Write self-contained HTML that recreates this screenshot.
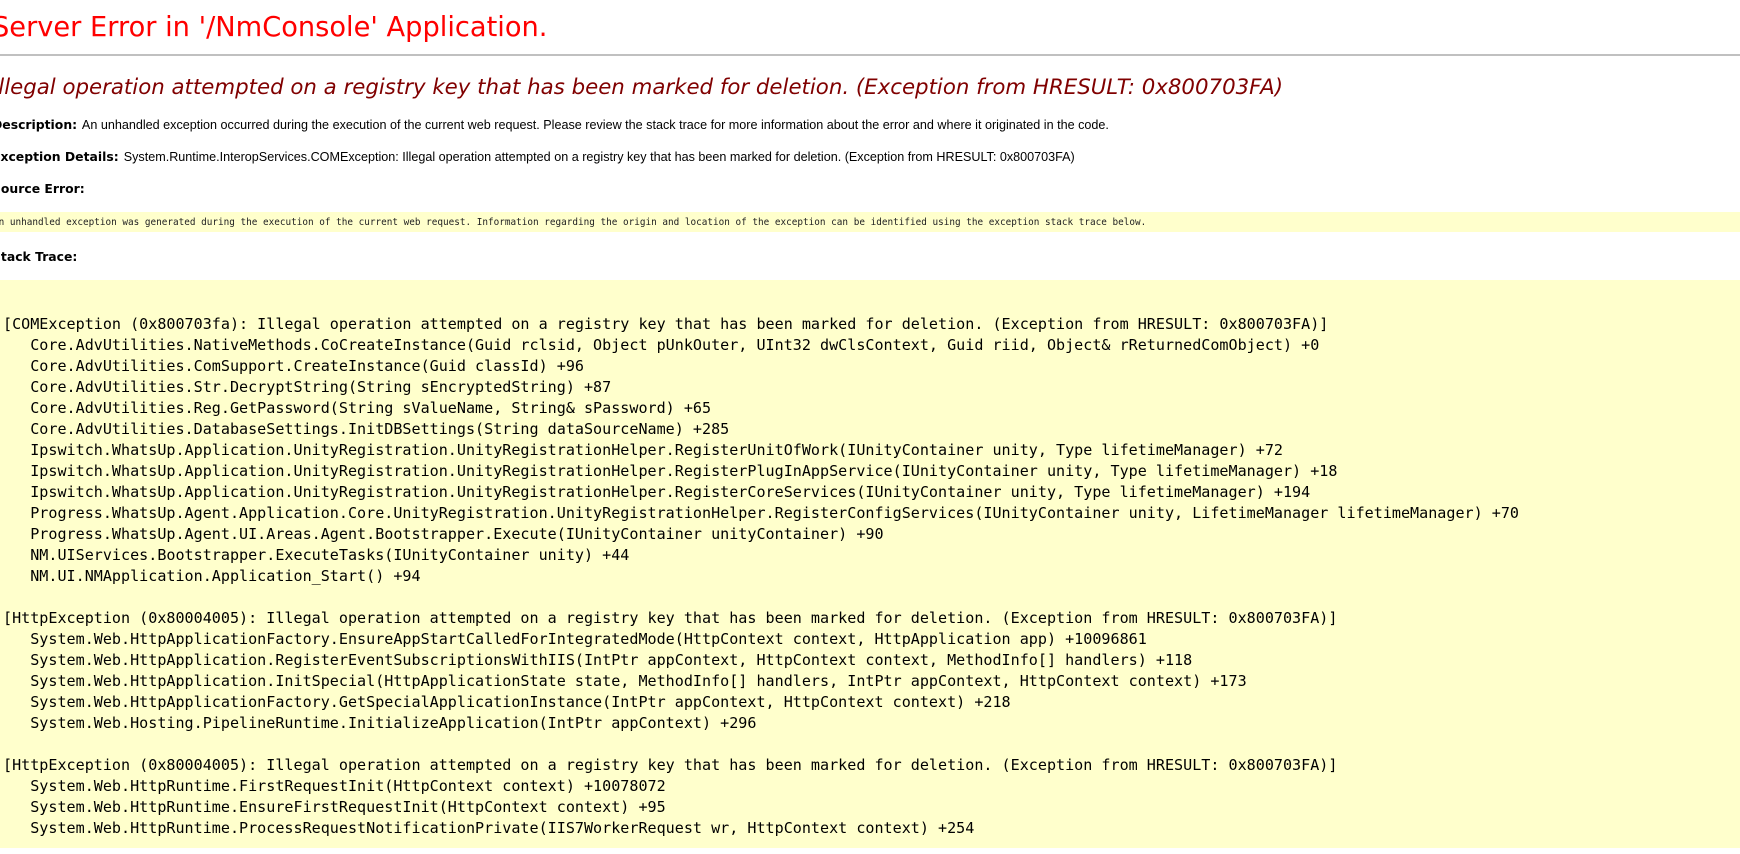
<!DOCTYPE html>
<html><head><meta charset="utf-8"><style>
html,body{margin:0;padding:0;width:1740px;height:854px;overflow:hidden;background:#fff;color:#000}
.a{position:absolute;white-space:pre;margin:0}
.v{font-family:"DejaVu Sans",Verdana,sans-serif}
.l{font-family:"Liberation Sans",Arial,sans-serif}
.m{font-family:"DejaVu Sans Mono","Liberation Mono",monospace}
b{font-family:"DejaVu Sans",Verdana,sans-serif;font-weight:bold;font-size:12.4px}
</style></head><body>
<div class="a v" style="left:-8px;top:13px;font-size:27.25px;line-height:30px;color:#f00">Server Error in '/NmConsole' Application.</div>
<div style="position:absolute;left:0;top:54px;width:1740px;height:2px;background:#c0c0c0"></div>
<div class="a v" style="left:-8px;top:74px;font-size:21.3px;line-height:28px;font-style:italic;color:#800000">Illegal operation attempted on a registry key that has been marked for deletion. (Exception from HRESULT: 0x800703FA)</div>
<div class="a l" style="left:-8px;top:116px;font-size:12.6px;line-height:18px"><b style="margin-right:2px">Description:</b> An unhandled exception occurred during the execution of the current web request. Please review the stack trace for more information about the error and where it originated in the code.</div>
<div class="a l" style="left:-8px;top:148px;font-size:12.6px;line-height:18px"><b style="margin-right:1.5px">Exception Details:</b> System.Runtime.InteropServices.COMException: Illegal operation attempted on a registry key that has been marked for deletion. (Exception from HRESULT: 0x800703FA)</div>
<div class="a" style="left:-8px;top:180px;font-size:13px;line-height:18px"><b>Source Error:</b></div>
<div style="position:absolute;left:0;top:212px;width:1740px;height:20px;background:#ffffcc"></div>
<div class="a m" style="left:-7px;top:213px;font-size:9.36px;line-height:20px;color:#222">An unhandled exception was generated during the execution of the current web request. Information regarding the origin and location of the exception can be identified using the exception stack trace below.</div>
<div class="a" style="left:-8px;top:248px;font-size:13px;line-height:18px"><b>Stack Trace:</b></div>
<div style="position:absolute;left:0;top:280px;width:1740px;height:568px;background:#ffffcc"></div>
<pre class="a m" style="left:3px;top:313.6px;font-size:15.087px;line-height:21px;color:#000">[COMException (0x800703fa): Illegal operation attempted on a registry key that has been marked for deletion. (Exception from HRESULT: 0x800703FA)]
   Core.AdvUtilities.NativeMethods.CoCreateInstance(Guid rclsid, Object pUnkOuter, UInt32 dwClsContext, Guid riid, Object&amp; rReturnedComObject) +0
   Core.AdvUtilities.ComSupport.CreateInstance(Guid classId) +96
   Core.AdvUtilities.Str.DecryptString(String sEncryptedString) +87
   Core.AdvUtilities.Reg.GetPassword(String sValueName, String&amp; sPassword) +65
   Core.AdvUtilities.DatabaseSettings.InitDBSettings(String dataSourceName) +285
   Ipswitch.WhatsUp.Application.UnityRegistration.UnityRegistrationHelper.RegisterUnitOfWork(IUnityContainer unity, Type lifetimeManager) +72
   Ipswitch.WhatsUp.Application.UnityRegistration.UnityRegistrationHelper.RegisterPlugInAppService(IUnityContainer unity, Type lifetimeManager) +18
   Ipswitch.WhatsUp.Application.UnityRegistration.UnityRegistrationHelper.RegisterCoreServices(IUnityContainer unity, Type lifetimeManager) +194
   Progress.WhatsUp.Agent.Application.Core.UnityRegistration.UnityRegistrationHelper.RegisterConfigServices(IUnityContainer unity, LifetimeManager lifetimeManager) +70
   Progress.WhatsUp.Agent.UI.Areas.Agent.Bootstrapper.Execute(IUnityContainer unityContainer) +90
   NM.UIServices.Bootstrapper.ExecuteTasks(IUnityContainer unity) +44
   NM.UI.NMApplication.Application_Start() +94

[HttpException (0x80004005): Illegal operation attempted on a registry key that has been marked for deletion. (Exception from HRESULT: 0x800703FA)]
   System.Web.HttpApplicationFactory.EnsureAppStartCalledForIntegratedMode(HttpContext context, HttpApplication app) +10096861
   System.Web.HttpApplication.RegisterEventSubscriptionsWithIIS(IntPtr appContext, HttpContext context, MethodInfo[] handlers) +118
   System.Web.HttpApplication.InitSpecial(HttpApplicationState state, MethodInfo[] handlers, IntPtr appContext, HttpContext context) +173
   System.Web.HttpApplicationFactory.GetSpecialApplicationInstance(IntPtr appContext, HttpContext context) +218
   System.Web.Hosting.PipelineRuntime.InitializeApplication(IntPtr appContext) +296

[HttpException (0x80004005): Illegal operation attempted on a registry key that has been marked for deletion. (Exception from HRESULT: 0x800703FA)]
   System.Web.HttpRuntime.FirstRequestInit(HttpContext context) +10078072
   System.Web.HttpRuntime.EnsureFirstRequestInit(HttpContext context) +95
   System.Web.HttpRuntime.ProcessRequestNotificationPrivate(IIS7WorkerRequest wr, HttpContext context) +254</pre>
</body></html>
